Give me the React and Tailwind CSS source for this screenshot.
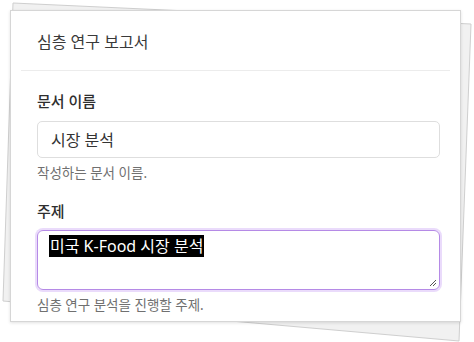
export default function App() {
  return (
    <main
      className="relative h-[342px] w-[474px] overflow-hidden bg-white text-[#333]"
      style={{ fontFamily: '"Noto Sans", "Noto Sans CJK KR", sans-serif' }}
    >
      <svg className="absolute inset-0" width="474" height="342" viewBox="0 0 474 342">
        <polygon points="13,3 471,24 459,341 3,301" fill="#f1f1f1" stroke="#cfcfcf" strokeWidth="1" />
      </svg>
      <div className="relative ml-[10px] mt-[10px] h-[312px] w-[451px] border border-[#d6d6d6] bg-white shadow-[0_1px_3px_rgba(0,0,0,0.12)]">
        <div className="px-[26px] pt-[20px] pb-[17px] text-[16px] leading-[22px] text-[#3a3a3a]">심층 연구 보고서</div>
        <div className="mx-[10px] border-t border-[#ececec]" />
        <div className="pl-[26px] pr-[20px] pt-[19px]">
          <div className="text-[15px] font-medium leading-[22px] text-[#2e2e2e]">문서 이름</div>
          <div className="mt-[9px] flex h-[37px] items-center rounded-[5px] border border-[#dedede] px-[13px] text-[16px] text-[#333]">
            시장 분석
          </div>
          <div className="mt-[5px] text-[13.5px] leading-[20px] text-[#707070]">작성하는 문서 이름.</div>
          <div className="mt-[17px] text-[15px] font-medium leading-[22px] text-[#2e2e2e]">주제</div>
          <div className="relative mt-[8px] h-[60px] rounded-[6px] border border-[#b58ae6] px-[11px] pt-[3px] shadow-[0_0_0_2px_#eadbfb]">
            <span className="bg-black px-[1px] text-[16px] leading-[23px] text-white">미국 K-Food 시장 분석</span>
            <svg className="absolute bottom-[2px] right-[2px]" width="8" height="8" viewBox="0 0 8 8">
              <path d="M7 1 L1 7 M7 4 L4 7" stroke="#555" strokeWidth="1" />
            </svg>
          </div>
          <div className="mt-[5px] text-[13.5px] leading-[20px] text-[#707070]">심층 연구 분석을 진행할 주제.</div>
        </div>
      </div>
    </main>
  );
}
